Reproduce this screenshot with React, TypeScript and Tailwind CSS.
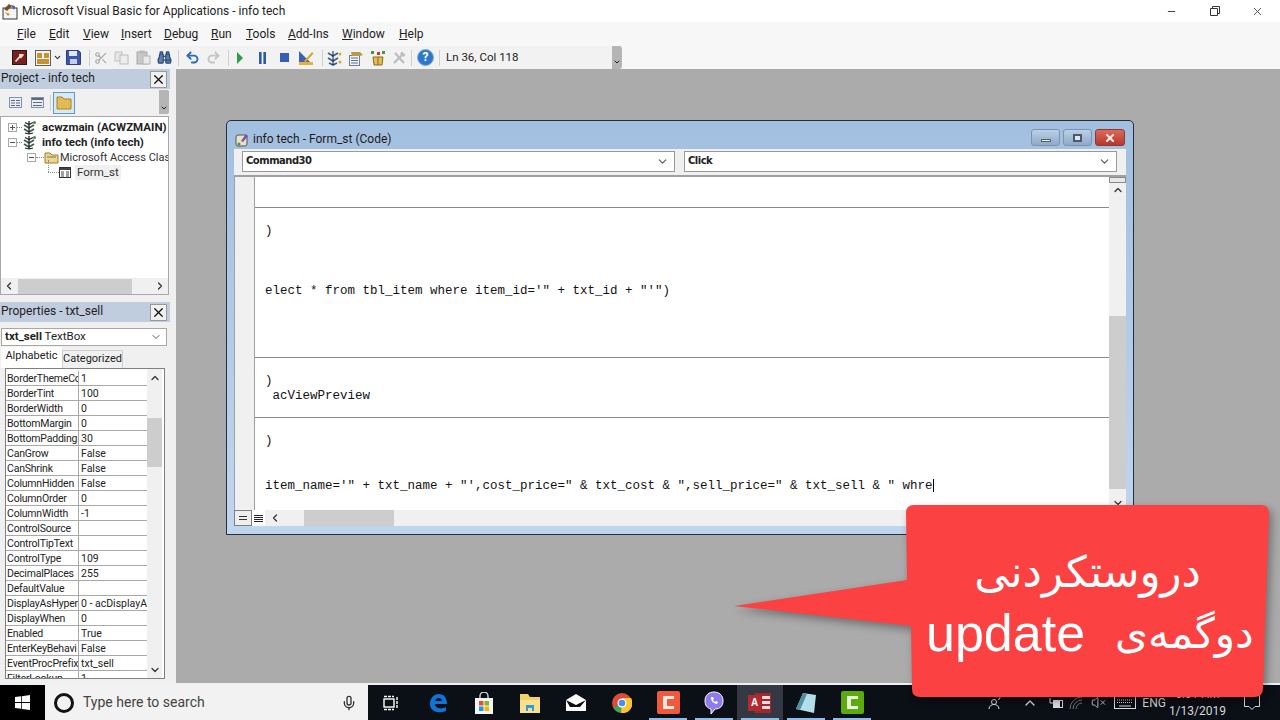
import { Mic, ChevronDown, ChevronUp, ChevronLeft, ChevronRight, Minus, X, Undo2, Redo2, Scissors, Binoculars, VolumeX } from "lucide-react"

const menus = [
  ["F", "ile", "w-[32px]"],
  ["E", "dit", "w-[34px]"],
  ["V", "iew", "w-[38px]"],
  ["I", "nsert", "w-[43px]"],
  ["D", "ebug", "w-[47px]"],
  ["R", "un", "w-[35px]"],
  ["T", "ools", "w-[42px]"],
  ["A", "dd-Ins", "w-[54px]"],
  ["W", "indow", "w-[57px]"],
  ["H", "elp", "w-[30px]"],
]

const props = [
  ["BorderThemeCo", "1"],
  ["BorderTint", "100"],
  ["BorderWidth", "0"],
  ["BottomMargin", "0"],
  ["BottomPadding", "30"],
  ["CanGrow", "False"],
  ["CanShrink", "False"],
  ["ColumnHidden", "False"],
  ["ColumnOrder", "0"],
  ["ColumnWidth", "-1"],
  ["ControlSource", ""],
  ["ControlTipText", ""],
  ["ControlType", "109"],
  ["DecimalPlaces", "255"],
  ["DefaultValue", ""],
  ["DisplayAsHyperl", "0 - acDisplayAs"],
  ["DisplayWhen", "0"],
  ["Enabled", "True"],
  ["EnterKeyBehavi", "False"],
  ["EventProcPrefix", "txt_sell"],
  ["FilterLookup", "1"],
]

// one entry per 15px row of the code pane
const codeLines: { text?: string; rule?: boolean }[] = [
  {}, {}, { rule: true }, { text: ")" }, {}, {}, {},
  { text: "elect * from tbl_item where item_id='\" + txt_id + \"'\")" },
  {}, {}, {}, {}, { rule: true }, { text: ")" },
  { text: " acViewPreview" }, {}, { rule: true }, { text: ")" }, {}, {},
  { text: "item_name='\" + txt_name + \"',cost_price=\" & txt_cost & \",sell_price=\" & txt_sell & \" whre" },
]

function VbProjectIcon() {
  return (
    <svg width="15" height="15" viewBox="0 0 15 15" fill="none" className="shrink-0">
      <path d="M2 5l5 3 5-3M2 9l5 3 5-3" stroke="#3f5a4a" strokeWidth="1.7" />
      <path d="M3 2.5l4 2 4-2M3 13l4 1 4-1" stroke="#222" strokeWidth="1.2" />
      <path d="M7 1v13" stroke="#222" strokeWidth="1.3" />
      <circle cx="12.5" cy="2.5" r="1.5" fill="#4a8a3a" />
    </svg>
  )
}

function FormIcon() {
  return (
    <svg width="12" height="11" viewBox="0 0 12 11" className="shrink-0">
      <rect x="0.5" y="0.5" width="11" height="10" fill="#fff" stroke="#333" />
      <rect x="1" y="1" width="10" height="2" fill="#444" />
      <path d="M2 5h3M2 7h3M2 9h3M7 5h3M7 7h3M7 9h3" stroke="#444" />
    </svg>
  )
}

function Expander({ open }: { open?: boolean }) {
  return (
    <span className="relative w-[9px] h-[9px] border border-[#a8a8a8] bg-white shrink-0 flex items-center justify-center">
      <span className="w-[5px] h-px bg-[#555]" />
      {!open && <span className="absolute w-px h-[5px] bg-[#555]" />}
    </span>
  )
}

function PaneHeader({ title }: { title: string }) {
  return (
    <div className="h-[20px] shrink-0 bg-[#bfcddf] flex items-center pl-[1px] pr-[3px] justify-between">
      <span className="text-[12px] text-[#222] pb-[3px]">{title}</span>
      <span className="w-[17px] h-[17px] bg-[#f0f0f0] border border-[#9a9a9a] flex items-center justify-center">
        <X size={15} strokeWidth={2} color="#111" />
      </span>
    </div>
  )
}

function Sep({ className }: { className: string }) {
  return <span className={`w-px h-[16px] bg-[#cfcfcf] shrink-0 ${className}`} />
}

function ToolbarIcons() {
  return (
    <div className="flex items-center h-[23px] pl-[12px]">
      <svg width="15" height="15" viewBox="0 0 15 15" className="mr-[8px]">
        <rect x="0.5" y="0.5" width="14" height="14" fill="#7d1f1f" stroke="#1c1c1c" />
        <path d="M3.5 11.5l5-5.5" stroke="#f3e2d8" strokeWidth="1.8" />
        <path d="M7 4h4.5v1.5L9 8.5 7.5 7z" fill="#f3e2d8" />
      </svg>
      <svg width="16" height="16" viewBox="0 0 16 16" className="mr-[2px]">
        <rect x="0.5" y="0.5" width="15" height="15" fill="#f4f4f4" stroke="#5f5f5f" />
        <rect x="2" y="3" width="5" height="5" fill="#c9922f" />
        <rect x="9" y="3" width="5" height="5" fill="#c9922f" />
        <rect x="2" y="9" width="12" height="5" fill="#c9922f" />
      </svg>
      <ChevronDown size={9} strokeWidth={3} color="#333" className="mr-[4px]" />
      <svg width="15" height="15" viewBox="0 0 15 15" className="mr-[8px]">
        <path d="M0.5 0.5h12l2 2v12h-14z" fill="#3b57a8" stroke="#2b3f80" />
        <rect x="3" y="1" width="8" height="5" fill="#dfe6f5" />
        <rect x="4" y="9" width="7" height="5" fill="#c7cfe4" />
      </svg>
      <Sep className="mr-[4px]" />
      <Scissors size={14} color="#a8a8a8" className="mr-[6px]" />
      <svg width="15" height="14" viewBox="0 0 15 14" className="mr-[7px]">
        <rect x="1" y="1" width="7" height="9" fill="#e6e6e6" stroke="#c2c2c2" />
        <rect x="6" y="4" width="8" height="9" fill="#ececec" stroke="#bcbcbc" />
      </svg>
      <svg width="15" height="15" viewBox="0 0 15 15" className="mr-[6px]">
        <rect x="1" y="2" width="10" height="12" fill="#c8c8c8" stroke="#aaa" />
        <rect x="3" y="0.5" width="6" height="3" fill="#bbb" />
        <rect x="7" y="6" width="7" height="8" fill="#e9e9e9" stroke="#b5b5b5" />
      </svg>
      <Binoculars size={15} color="#2d4a7a" fill="#5d7fb5" className="mr-[6px]" />
      <Sep className="mr-[6px]" />
      <Undo2 size={15} strokeWidth={3} color="#2a6ab8" className="mr-[6px]" />
      <Redo2 size={15} strokeWidth={3} color="#c4c4c4" className="mr-[7px]" />
      <Sep className="mr-[7px]" />
      <svg width="8" height="12" viewBox="0 0 8 12" className="mr-[14px]"><path d="M1 0l6 6-6 6z" fill="#2f9a4a" /></svg>
      <svg width="9" height="12" viewBox="0 0 9 12" className="mr-[13px]"><path d="M1 0h2.6v12H1zM5.4 0H8v12H5.4z" fill="#2c5aa8" /></svg>
      <svg width="9" height="9" viewBox="0 0 9 9" className="mr-[9px]"><rect width="9" height="9" fill="#3560b4" /></svg>
      <svg width="16" height="16" viewBox="0 0 16 16" className="mr-[8px]">
        <path d="M1 1v14h14z" fill="#3c62b0" />
        <path d="M1 15v-3h14v3z" fill="#e3b23c" />
        <path d="M6 11l8-9 1.5 1.5-8 9z" fill="#d7a332" />
      </svg>
      <Sep className="mr-[3px]" />
      <svg width="16" height="16" viewBox="0 0 16 16" className="mr-[6px]">
        <path d="M2 3l5 3 5-3M2 8l5 3 5-3M3 13l4 2 4-2" stroke="#3a5f9a" strokeWidth="1.8" fill="none" />
        <path d="M7 1v14" stroke="#222" />
        <circle cx="14" cy="4" r="1.5" fill="#d8a93c" />
        <circle cx="14" cy="12" r="1.5" fill="#d8a93c" />
      </svg>
      <svg width="16" height="16" viewBox="0 0 16 16" className="mr-[6px]">
        <rect x="1.5" y="5.5" width="10" height="10" fill="#f4f4f4" stroke="#6d7f9f" />
        <path d="M3 2h9l3 3-3 1H4z" fill="#b99a4a" />
        <path d="M3 8h7M3 10.5h7M3 13h7" stroke="#5c6d8c" />
      </svg>
      <svg width="16" height="16" viewBox="0 0 16 16" className="mr-[6px]">
        <path d="M3 7h10l-1 8H4z" fill="#e2bd55" stroke="#8b6c1e" />
        <path d="M8 7v8" stroke="#8b6c1e" />
        <rect x="1" y="1" width="3" height="3" fill="#4f8f4a" />
        <rect x="7" y="2" width="3" height="3" fill="#c0392b" />
        <rect x="12" y="1" width="3" height="3" fill="#3f9a3f" />
      </svg>
      <svg width="14" height="14" viewBox="0 0 14 14" className="mr-[5px]" fill="none" stroke="#bdbdbd" strokeWidth="2.2">
        <path d="M2 12l9-9M3 2l9 10" />
        <path d="M9 1.5l3.5 3.5" strokeWidth="3" />
      </svg>
      <Sep className="mr-[5px]" />
      <span className="w-[17px] h-[17px] rounded-full bg-[#2f78c8] border border-[#7eaee0] text-white text-[12px] font-bold leading-[15px] text-center mr-[5px] shrink-0">?</span>
      <Sep className="mr-[6px]" />
    </div>
  )
}

function Scroll({ dir }: { dir: "up" | "down" | "left" | "right" }) {
  const cls = "shrink-0"
  if (dir === "up") return <ChevronUp size={12} strokeWidth={2.5} color="#333" className={cls} />
  if (dir === "down") return <ChevronDown size={12} strokeWidth={2.5} color="#333" className={cls} />
  if (dir === "left") return <ChevronLeft size={12} strokeWidth={2.5} color="#333" className={cls} />
  return <ChevronRight size={12} strokeWidth={2.5} color="#333" className={cls} />
}

function CodeWindow() {
  return (
    <div className="absolute left-[50px] top-[51px] w-[908px] h-[415px] border border-[#20303f] rounded-t-[5px] bg-gradient-to-b from-[#a3bfdf] to-[#c0d6ee] flex flex-col px-[7px] pb-[8px]">
      <div className="h-[28px] flex items-end justify-between shrink-0 pb-[3px]">
        <div className="flex items-center gap-[3px] -mb-[2px]">
          <svg width="15" height="15" viewBox="0 0 15 15" className="ml-[1px]">
            <rect x="1" y="3" width="11" height="11" rx="2" fill="#e7e2c4" stroke="#555" />
            <path d="M6 9l5-7 2 2-5 6z" fill="#7a4fb0" />
            <circle cx="4" cy="12" r="1.5" fill="#4f8f4a" />
          </svg>
          <span className="text-[12px] text-[#1c1c1c]">info tech - Form_st (Code)</span>
        </div>
        <div className="flex gap-[3px] pr-[1px]">
          <span className="w-[29px] h-[17px] rounded-[3px] border border-[#7b93b3] bg-gradient-to-b from-[#bcd0e6] to-[#8fa9c8] flex items-end justify-center pb-[3px]">
            <span className="w-[10px] h-[3px] bg-[#eef2f7] border border-[#50606f]" />
          </span>
          <span className="w-[29px] h-[17px] rounded-[3px] border border-[#7b93b3] bg-gradient-to-b from-[#bcd0e6] to-[#8fa9c8] flex items-center justify-center">
            <span className="w-[9px] h-[8px] border-2 border-[#4b5b6c] bg-[#dfe8f2]" />
          </span>
          <span className="w-[30px] h-[17px] rounded-[3px] border border-[#8a3a30] bg-gradient-to-b from-[#dc6a5a] to-[#b5392c] flex items-center justify-center">
            <X size={12} strokeWidth={4} color="#f5efe8" />
          </span>
        </div>
      </div>
      <div className="flex-1 min-h-0 bg-[#f0f0f0] flex flex-col">
        <div className="flex gap-[9px] h-[26px] pl-[8px] pr-[9px] pt-[2px] shrink-0">
          <div className="flex-1 h-[21px] bg-white border border-[#9a9a9a] flex items-center justify-between pl-[3px] pr-[5px]">
            <span className="text-[10px] font-bold text-[#222] font-['DejaVu_Sans'] tracking-[-0.5px] pb-[2px]">Command30</span>
            <ChevronDown size={13} color="#555" />
          </div>
          <div className="flex-1 h-[21px] bg-white border border-[#9a9a9a] flex items-center justify-between pl-[3px] pr-[5px]">
            <span className="text-[10px] font-bold text-[#222] font-['DejaVu_Sans'] tracking-[-0.5px] pb-[2px]">Click</span>
            <ChevronDown size={13} color="#555" />
          </div>
        </div>
        <div className="flex-1 min-h-0 flex flex-col bg-white border-t-2 border-[#a0a0a0]">
          <div className="flex-1 min-h-0 flex">
            <div className="w-[21px] shrink-0 bg-[#f0f0f0] border-x border-[#a0a0a0]" />
            <div className="flex-1 min-w-0 overflow-hidden font-['Liberation_Mono'] text-[12.5px] leading-[19px] text-[#111] whitespace-pre">
              {codeLines.map((line, i) => (
                <div key={i} className={`h-[15px] pl-[10px] ${line.rule ? "border-t border-[#8a8a8a]" : ""}`}>
                  {line.text}
                  {i === codeLines.length - 1 && <span className="inline-block w-px h-[13px] bg-black align-middle" />}
                </div>
              ))}
            </div>
            <div className="w-[17px] shrink-0 flex flex-col bg-[#f0f0f0] items-center">
              <div className="w-full h-[6px] border border-[#8a8a8a] bg-[#e8e8e8]" />
              <div className="h-[14px] flex items-center"><Scroll dir="up" /></div>
              <div className="flex-1 w-full pt-[119px]">
                <div className="h-[173px] bg-[#cdcdcd] w-full" />
              </div>
              <div className="h-[14px] flex items-center"><Scroll dir="down" /></div>
            </div>
          </div>
          <div className="h-[16px] flex bg-[#f0f0f0] shrink-0 items-center">
            <span className="w-[18px] h-[16px] border border-[#808080] bg-[#eee] flex items-center justify-center">
              <span className="w-[8px] h-[4px] border-y border-[#333]" />
            </span>
            <span className="w-[13px] h-[16px] flex flex-col items-center justify-center gap-px bg-white">
              <span className="w-[9px] h-px bg-[#222]" />
              <span className="w-[9px] h-px bg-[#222]" />
              <span className="w-[9px] h-px bg-[#222]" />
              <span className="w-[9px] h-px bg-[#222]" />
            </span>
            <span className="ml-[4px] w-[12px]"><Scroll dir="left" /></span>
            <span className="ml-[23px] w-[90px] h-[16px] bg-[#cdcdcd]" />
          </div>
        </div>
      </div>
    </div>
  )
}

function Callout() {
  return (
    <div className="absolute left-[730px] top-[500px] w-[545px] h-[202px]">
      <svg width="545" height="202" viewBox="0 0 545 202" className="drop-shadow-[3px_4px_4px_rgba(0,0,0,0.35)]">
        <path
          d="M184 5H531Q539 5 539 13L533 188Q533 197 524 197H190Q182 197 182 189L181 126L4 106L177 80L176 13Q176 5 184 5Z"
          fill="#fb4141"
        />
      </svg>
      <div className="absolute left-[176px] top-[44px] w-[363px] text-center text-white text-[43.5px] leading-[56px] font-['DejaVu_Sans'] whitespace-nowrap" dir="rtl">
        دروستکردنی
      </div>
      <div className="absolute left-[196px] top-[98px] flex items-center text-white whitespace-nowrap h-[70px] gap-[30px]">
        <span className="text-[52px] font-['Liberation_Sans']">update</span>
        <span className="text-[42px] font-['DejaVu_Sans']" dir="rtl">دوگمەی</span>
      </div>
    </div>
  )
}

function TaskIcon({ active, running, children }: { active?: boolean; running?: boolean; children: React.ReactNode }) {
  return (
    <div className={`relative w-[46px] h-full flex items-center justify-center ${active ? "bg-[#333842]" : ""}`}>
      {children}
      {running && <span className="absolute bottom-0 left-[4px] right-[4px] h-[2px] bg-[#8fbce8]" />}
    </div>
  )
}

function Taskbar() {
  return (
    <div className="h-[37px] shrink-0 flex bg-[#0b0f16] border-t-2 border-[#f0f0f0] text-white">
      <div className="w-[45px] bg-black flex items-center justify-center">
        <svg width="15" height="15" viewBox="0 0 16 16" fill="#fff">
          <path d="M0 2.2l6.5-.9v6.2H0zM7.3 1.2L16 0v7.5H7.3zM0 8.4h6.5v6.3L0 13.8zM7.3 8.4H16V16l-8.7-1.2z" />
        </svg>
      </div>
      <div className="w-[323px] bg-[#f2f2f2] flex items-center pl-[9px] pr-[11px]">
        <span className="w-[20px] h-[20px] rounded-full border-[3px] border-[#111] bg-transparent" />
        <span className="ml-[9px] flex-1 text-[14px] text-[#444]">Type here to search</span>
        <Mic size={16} color="#333" />
      </div>
      <div className="flex items-center">
        <div className="w-[46px] flex justify-center">
          <svg width="16" height="16" viewBox="0 0 16 16" fill="none" stroke="#fff" strokeWidth="1.4">
            <rect x="1" y="4" width="10" height="8" />
            <path d="M1 1.5h10M1 14.5h10M14 2v12" strokeDasharray="3 1" />
          </svg>
        </div>
      </div>
      <div className="flex items-center ml-[1px]">
        <TaskIcon>
          <svg width="20" height="20" viewBox="0 0 20 20">
            <path d="M2 11C2 5 6 1 11 1c5 0 8 4 8 10H7c0 4 6 6 11 3v4c-7 3-16 1-16-7zM7 8h7c0-4-6-4-7 0z" fill="#0f74d8" />
          </svg>
        </TaskIcon>
        <TaskIcon>
          <svg width="20" height="22" viewBox="0 0 20 22">
            <path d="M6 6V4a4 4 0 018 0v2" stroke="#ddd" strokeWidth="1.3" fill="none" />
            <path d="M1 6h18v16H1z" fill="#f5f5f5" />
            <rect x="5" y="9" width="4.5" height="4.5" fill="#e8502a" />
            <rect x="10.5" y="9" width="4.5" height="4.5" fill="#7eb82e" />
            <rect x="5" y="14.5" width="4.5" height="4.5" fill="#1a9be0" />
            <rect x="10.5" y="14.5" width="4.5" height="4.5" fill="#f5b700" />
          </svg>
        </TaskIcon>
        <TaskIcon>
          <svg width="20" height="20" viewBox="0 0 20 20">
            <path d="M0 1h8l2 3h10v16H0z" fill="#f3cf6a" />
            <path d="M0 7h20v13H0z" fill="#f9e08f" />
            <path d="M6 12h8v6h-2v-3H8v3H6z" fill="#2d9be0" />
          </svg>
        </TaskIcon>
        <TaskIcon>
          <svg width="20" height="17" viewBox="0 0 20 17">
            <path d="M0 6l10-6 10 6v11H0z" fill="#fff" />
            <path d="M0 6l10 5 10-5-6 7H4z" fill="#0b0f16" />
            <path d="M5 6l10 0-5 3z" fill="#fff" />
          </svg>
        </TaskIcon>
        <TaskIcon>
          <svg width="20" height="20" viewBox="0 0 20 20">
            <circle cx="10" cy="10" r="10" fill="#dd4b3a" />
            <path d="M10 10L1.5 15a10 10 0 007 5z" fill="#3ba657" />
            <path d="M10 5h9a10 10 0 01-10 15z" fill="#f7c52d" />
            <circle cx="10" cy="10" r="4.5" fill="#fff" />
            <circle cx="10" cy="10" r="3.3" fill="#4a8ef0" />
          </svg>
        </TaskIcon>
        <TaskIcon running>
          <svg width="23" height="23" viewBox="0 0 23 23">
            <rect width="23" height="23" rx="2" fill="#ef5a3c" />
            <path d="M6 5h11v3H10v7h7v3H6z" fill="#f8e6e0" />
          </svg>
        </TaskIcon>
        <TaskIcon running>
          <svg width="20" height="24" viewBox="0 0 20 24">
            <path d="M10 1c5 0 9 3 9 9 0 5-3 8-8 8l-4 5v-5C3 17 1 14 1 10c0-6 4-9 9-9z" fill="#8f7bea" stroke="#fff" />
            <path d="M7 6c-1 3 3 7 6 7l1-2-2-1-1 1c-1-.5-2-1.5-2-2l1-1-1-2z" fill="#fff" />
          </svg>
        </TaskIcon>
        <TaskIcon active running>
          <svg width="24" height="22" viewBox="0 0 24 22">
            <path d="M7 1h16v20H7z" fill="#a4262c" />
            <path d="M14 4h8v3h-8zM14 9h8v3h-8zM14 14h8v3h-8z" fill="#eadada" />
            <rect y="3" width="13" height="16" fill="#b02a30" />
          </svg>
          <span className="absolute left-[14px] top-[10px] text-[10px] font-bold font-['Liberation_Sans'] text-white">A</span>
        </TaskIcon>
        <TaskIcon running>
          <svg width="22" height="22" viewBox="0 0 22 22">
            <path d="M8 1l13 2-2 18L1 17z" fill="#b5dfe8" />
            <path d="M8 1l4 1-7 16-4-1z" fill="#4f8fa3" />
          </svg>
        </TaskIcon>
        <TaskIcon running>
          <svg width="23" height="23" viewBox="0 0 23 23">
            <rect width="23" height="23" rx="2" fill="#5cab0e" />
            <path d="M6 5h11v3H10v7h7v3H6z" fill="#e8f5d8" />
          </svg>
        </TaskIcon>
      </div>
      <div className="flex-1 flex items-center justify-end text-[#d8d8d8]">
        <svg width="15" height="15" viewBox="0 0 15 15" fill="none" stroke="#ddd" className="mr-[19px]">
          <circle cx="6" cy="7" r="2.5" />
          <path d="M1 14c0-6 10-6 10 0M10 4.5a2 2 0 10-2-2" />
        </svg>
        <ChevronUp size={16} className="mr-[11px]" />
        <svg width="15" height="14" viewBox="0 0 15 14" fill="none" stroke="#ddd" className="mr-[5px]">
          <rect x="4.5" y="4.5" width="9" height="7" />
          <rect x="5.5" y="5.5" width="5" height="5" fill="#ddd" />
          <path d="M1 2v5h3" />
        </svg>
        <svg width="14" height="14" viewBox="0 0 14 14" fill="none" stroke="#777" className="mr-[8px]">
          <path d="M1 13a12 12 0 0112-12M4 13a9 9 0 019-9M7 13a6 6 0 016-6" />
        </svg>
        <VolumeX size={15} strokeWidth={1.4} className="mr-[8px]" />
        <svg width="22" height="13" viewBox="0 0 22 13" fill="none" stroke="#ddd" className="mr-[6px]">
          <rect x="0.5" y="0.5" width="21" height="12" />
          <path d="M3 4h16M3 6.5h16" strokeDasharray="1 1" />
          <path d="M5 10h12" />
        </svg>
        <span className="text-[12px] mr-[3px]">ENG</span>
        <div className="flex flex-col items-center text-[12px] leading-[17px] mr-[18px]">
          <span>5:01 AM</span>
          <span>1/13/2019</span>
        </div>
        <svg width="16" height="15" viewBox="0 0 16 15" fill="none" stroke="#ddd" className="mr-[20px]">
          <path d="M.5.5h15v11H11l-3 3-3-3H.5z" />
        </svg>
      </div>
    </div>
  )
}

export default function App() {
  return (
    <div className="relative w-[1280px] h-[720px] overflow-hidden bg-[#f0f0f0] flex flex-col font-['Roboto',sans-serif] text-[#222]">
      <div className="h-[22px] shrink-0 bg-white flex items-center pl-[2px]">
        <svg width="17" height="17" viewBox="0 0 17 17">
          <rect x="1" y="5" width="14" height="11" fill="#f5f5f5" stroke="#333" />
          <path d="M2 6l5-5 3 2-5 5z" fill="#7a4a20" />
          <path d="M9 2l4 1-1 4z" fill="#3a62b5" />
          <path d="M3 9l3 4 2-2z" fill="#c9922f" />
        </svg>
        <span className="ml-[3px] text-[12px] text-[#222]">Microsoft Visual Basic for Applications - info tech</span>
        <div className="ml-auto flex items-center">
          <span className="w-[43px] flex justify-center"><Minus size={11} color="#333" /></span>
          <span className="w-[43px] flex justify-center">
            <svg width="10" height="10" viewBox="0 0 10 10" fill="none" stroke="#333"><path d="M.5 2.5h7v7h-7zM2.5 2.5v-2h7v7h-2" /></svg>
          </span>
          <span className="w-[43px] flex justify-center mr-[1px]"><X size={13} color="#333" strokeWidth={1.5} /></span>
        </div>
      </div>
      <div className="h-[24px] shrink-0 bg-[#f7f7f7] flex items-center pl-[17px] text-[12px]">
        {menus.map(([u, rest, w]) => (
          <span key={u} className={`${w} shrink-0`}><span className="underline">{u}</span>{rest}</span>
        ))}
      </div>
      <div className="h-[23px] shrink-0 bg-[#f7f7f7] flex items-center">
        <div className="w-[622px] h-[23px] flex items-center bg-[#f2f2f2] rounded-r-[3px]">
          <ToolbarIcons />
          <div className="h-[23px] flex items-center text-[11.5px]">Ln 36, Col 118</div>
          <div className="ml-auto w-[10px] h-[23px] bg-[#b5b5b5] rounded-r-[3px] flex flex-col items-center justify-end pb-[3px]">
            <ChevronDown size={8} strokeWidth={3} color="#222" />
          </div>
        </div>
      </div>
      <div className="flex-1 min-h-0 flex">
        <div className="w-[170px] shrink-0 flex flex-col">
          <PaneHeader title="Project - info tech" />
          <div className="h-[27px] shrink-0 flex items-center pl-[8px] relative">
            <svg width="15" height="13" viewBox="0 0 15 13" className="shrink-0 mr-[7px]">
              <rect x="1.5" y="1.5" width="12" height="10" fill="#e9eef6" stroke="#7f92b5" />
              <path d="M3 4.5h4M3 7h4M3 9.5h4M8 4.5h4M8 7h4M8 9.5h4" stroke="#667" />
            </svg>
            <svg width="15" height="13" viewBox="0 0 15 13" className="shrink-0 mr-[5px]">
              <rect x="1.5" y="1.5" width="12" height="10" fill="#e9eef6" stroke="#7f92b5" />
              <rect x="2" y="2" width="11" height="2" fill="#667" />
              <path d="M3 6.5h9M3 9.5h9" stroke="#667" />
            </svg>
            <span className="w-px h-[16px] bg-[#cfcfcf] mr-[2px]" />
            <span className="w-[22px] h-[22px] border border-[#5a9ec9] bg-[#d8e9f5] flex items-center justify-center">
              <svg width="16" height="14" viewBox="0 0 16 14"><path d="M1 1h5l2 2h7v10H1z" fill="#e3bb55" stroke="#a4822e" /></svg>
            </span>
            <span className="absolute right-[1px] top-[1px] w-[10px] h-[24px] bg-[#b5b5b5] rounded-r-[2px] flex flex-col items-center justify-end pb-[2px]">
              <ChevronDown size={8} strokeWidth={3} color="#222" />
            </span>
          </div>
          <div className="h-[179px] shrink-0 border border-[#a8a8a8] bg-white flex flex-col overflow-hidden mr-[1px]">
            <div className="flex-1 pt-[3px] text-[11.5px] leading-[15px] whitespace-nowrap overflow-hidden">
              <div className="flex items-center h-[15px] pl-[7px]">
                <Expander />
                <span className="w-[5px] border-t border-dotted border-[#888]" />
                <VbProjectIcon />
                <span className="ml-[5px] font-bold">acwzmain (ACWZMAIN)</span>
              </div>
              <div className="flex items-center h-[15px] pl-[7px]">
                <Expander open />
                <span className="w-[5px] border-t border-dotted border-[#888]" />
                <VbProjectIcon />
                <span className="ml-[5px] font-bold">info tech (info tech)</span>
              </div>
              <div className="flex items-center h-[15px] pl-[26px]">
                <Expander open />
                <span className="w-[8px] shrink-0 border-t border-dotted border-[#888]" />
                <svg width="15" height="12" viewBox="0 0 15 12" className="shrink-0">
                  <path d="M1 1h5l2 2h6v8H1z" fill="#efd685" stroke="#97803c" />
                  <path d="M3 5h9" stroke="#777" />
                </svg>
                <span className="ml-[1px] text-[#333] text-[11px]">Microsoft Access Class Objects</span>
              </div>
              <div className="relative flex items-center h-[15px] pl-[47px]">
                <span className="absolute left-[47px] -top-[5px] h-[12px] border-l border-dotted border-[#888]" />
                <span className="w-[11px] border-t border-dotted border-[#888]" />
                <FormIcon />
                <span className="ml-[4px] text-[#333] bg-[#f0f0f0] px-[2px]">Form_st</span>
              </div>
            </div>
            <div className="h-[16px] bg-[#f0f0f0] flex items-center shrink-0">
              <span className="w-[15px] pl-[2px]"><Scroll dir="left" /></span>
              <span className="w-[114px] ml-[2px] h-[15px] bg-[#cdcdcd]" />
              <span className="ml-auto pr-[2px]"><Scroll dir="right" /></span>
            </div>
          </div>
          <div className="h-[7px] shrink-0" />
          <PaneHeader title="Properties - txt_sell" />
          <div className="h-[18px] shrink-0 mt-[6px] ml-[1px] mr-[3px] bg-white border border-[#a8a8a8] flex items-center justify-between pl-[3px] pr-[4px] text-[11.5px]">
            <span><span className="font-bold">txt_sell</span> TextBox</span>
            <ChevronDown size={12} color="#555" />
          </div>
          <div className="flex items-end h-[22px] pl-[1px] text-[11px] shrink-0">
            <span className="h-[21px] w-[61px] bg-white flex items-center justify-center pb-[3px]">Alphabetic</span>
            <span className="h-[18px] w-[61px] bg-[#f0f0f0] border border-[#d0d0d0] border-b-0 flex items-center justify-center">Categorized</span>
          </div>
          <div className="flex-1 min-h-0 ml-[5px] mr-[5px] mb-[4px] border border-[#808080] bg-white flex overflow-hidden pr-[2px]">
            <div className="flex-1 min-w-0 text-[10.5px] pt-[2px]">
              {props.map(([name, value]) => (
                <div key={name} className="h-[15px] flex border-b border-[#a8a8a8] leading-[16px] whitespace-nowrap">
                  <span className="w-[73px] shrink-0 overflow-hidden border-r border-[#a8a8a8] pl-[1px] tracking-[-0.2px]">{name}</span>
                  <span className="flex-1 min-w-0 overflow-hidden pl-[2px]">{value}</span>
                </div>
              ))}
            </div>
            <div className="w-[15px] shrink-0 bg-[#f0f0f0] flex flex-col items-center">
              <div className="h-[17px] flex items-center"><Scroll dir="up" /></div>
              <div className="h-[32px]" />
              <div className="w-full h-[49px] bg-[#cdcdcd]" />
              <div className="flex-1" />
              <div className="h-[17px] flex items-center"><Scroll dir="down" /></div>
            </div>
          </div>
        </div>
        <div className="flex-1 relative">
          <div className="absolute inset-y-0 left-[6px] right-0 bg-[#ababab]">
            <CodeWindow />
          </div>
        </div>
      </div>
      <Taskbar />
      <Callout />
    </div>
  )
}
